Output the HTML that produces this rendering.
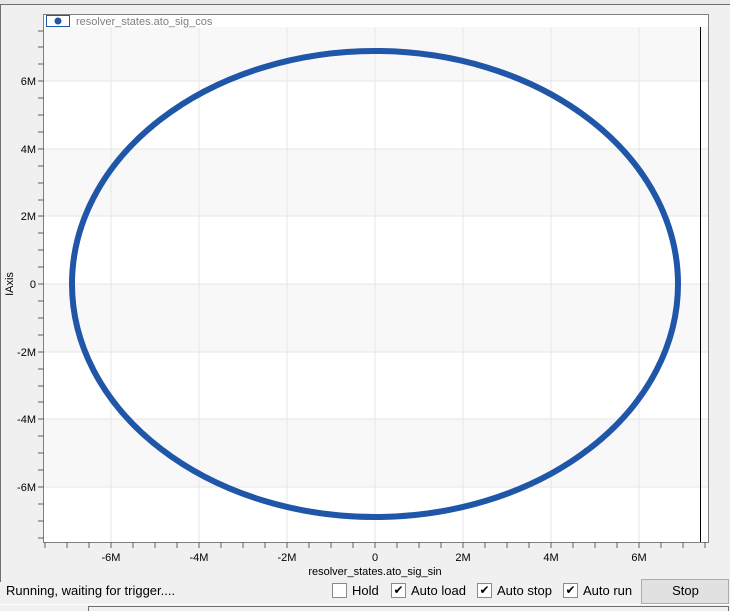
<!DOCTYPE html>
<html><head><style>
body{margin:0;width:732px;height:611px;background:#f0f0f0;overflow:hidden;font-family:"Liberation Sans",sans-serif;position:relative}
.t{position:absolute;font-size:13px;color:#000}
.cb{position:absolute;width:13px;height:13px;border:1px solid #8a8a8a;background:#fff;top:583px;font-size:12px;line-height:13px;text-align:center}
</style></head><body>
<svg width="732" height="611" style="position:absolute;left:0;top:0" font-family="Liberation Sans, sans-serif">
<rect x="0" y="0" width="732" height="4" fill="#e8e8e8"/>
<line x1="0" y1="4.5" x2="730" y2="4.5" stroke="#707070"/>
<line x1="0.5" y1="4" x2="0.5" y2="582" stroke="#707070"/>
<line x1="731" y1="0" x2="731" y2="611" stroke="#fff" stroke-width="2"/>
<rect x="43.5" y="14.5" width="665" height="528" fill="#fff" stroke="#808080"/>
<g fill="#f8f8f8">
<rect x="44" y="27" width="664" height="54"/>
<rect x="44" y="149" width="664" height="67"/>
<rect x="44" y="284" width="664" height="68"/>
<rect x="44" y="419" width="664" height="68"/>
</g>
<g stroke="#e6e6e6">
<line x1="111" y1="27" x2="111" y2="542"/><line x1="199" y1="27" x2="199" y2="542"/><line x1="287" y1="27" x2="287" y2="542"/><line x1="375" y1="27" x2="375" y2="542"/><line x1="463" y1="27" x2="463" y2="542"/><line x1="551" y1="27" x2="551" y2="542"/><line x1="639" y1="27" x2="639" y2="542"/>
<line x1="44" y1="81" x2="708" y2="81"/><line x1="44" y1="149" x2="708" y2="149"/><line x1="44" y1="216" x2="708" y2="216"/><line x1="44" y1="284" x2="708" y2="284"/><line x1="44" y1="352" x2="708" y2="352"/><line x1="44" y1="419" x2="708" y2="419"/><line x1="44" y1="487" x2="708" y2="487"/>
</g>
<line x1="700.5" y1="27" x2="700.5" y2="542" stroke="#000"/>
<ellipse cx="375" cy="284" rx="303" ry="233" fill="none" stroke="#1f56a8" stroke-width="6"/>
<circle cx="586" cy="451" r="3" fill="#1f56a8"/>
<g stroke="#606060">
<path d="M38 31H44M38 47H44M38 64H44M38 81H44M38 98H44M38 115H44M38 132H44M38 149H44M38 166H44M38 183H44M38 200H44M38 216H44M38 233H44M38 250H44M38 267H44M38 284H44M38 301H44M38 318H44M38 335H44M38 352H44M38 369H44M38 386H44M38 402H44M38 419H44M38 436H44M38 453H44M38 470H44M38 487H44M38 504H44M38 521H44M38 538H44"/>
<path d="M45 542V548M67 542V548M89 542V548M111 542V548M133 542V548M155 542V548M177 542V548M199 542V548M221 542V548M243 542V548M265 542V548M287 542V548M309 542V548M331 542V548M353 542V548M375 542V548M397 542V548M419 542V548M441 542V548M463 542V548M485 542V548M507 542V548M529 542V548M551 542V548M573 542V548M595 542V548M617 542V548M639 542V548M661 542V548M683 542V548M705 542V548"/>
</g>
<g font-size="11" fill="#000" text-anchor="end">
<text x="36" y="85">6M</text><text x="36" y="153">4M</text><text x="36" y="220">2M</text><text x="36" y="288">0</text><text x="36" y="356">-2M</text><text x="36" y="423">-4M</text><text x="36" y="491">-6M</text>
</g>
<g font-size="11" fill="#000" text-anchor="middle">
<text x="111" y="561">-6M</text><text x="199" y="561">-4M</text><text x="287" y="561">-2M</text><text x="375" y="561">0</text><text x="463" y="561">2M</text><text x="551" y="561">4M</text><text x="639" y="561">6M</text>
<text x="375" y="575">resolver_states.ato_sig_sin</text>
</g>
<text x="13" y="284" font-size="11" text-anchor="middle" transform="rotate(-90 13 284)">IAxis</text>
<rect x="46.5" y="15.5" width="23" height="11" fill="#fff" stroke="#1f56a8"/>
<circle cx="58" cy="21" r="3.5" fill="#1f56a8"/>
<text x="76" y="25" font-size="11" fill="#808080">resolver_states.ato_sig_cos</text>
<line x1="0" y1="604.5" x2="732" y2="604.5" stroke="#fff"/>
<rect x="88.5" y="606.5" width="640" height="8" fill="#f0f0f0" stroke="#707070"/>
<rect x="641.5" y="579.5" width="87" height="24" fill="#e1e1e1" stroke="#adadad"/>
</svg>
<div class="t" style="left:6px;top:583px">Running, waiting for trigger....</div>
<div class="cb" style="left:332px"></div><div class="t" style="left:352px;top:583px">Hold</div>
<div class="cb" style="left:391px">✔</div><div class="t" style="left:411px;top:583px">Auto load</div>
<div class="cb" style="left:477px">✔</div><div class="t" style="left:497px;top:583px">Auto stop</div>
<div class="cb" style="left:563px">✔</div><div class="t" style="left:583px;top:583px">Auto run</div>
<div class="t" style="left:642px;top:583px;width:87px;text-align:center">Stop</div>
</body></html>
